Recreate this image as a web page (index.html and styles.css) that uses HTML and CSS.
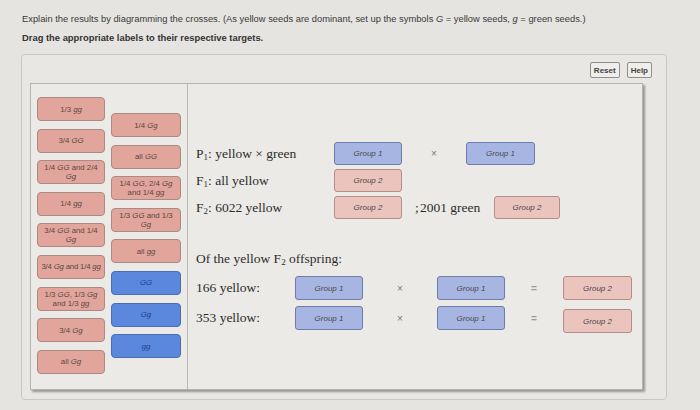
FILE: index.html
```html
<!DOCTYPE html>
<html lang="en">
<head>
<meta charset="utf-8">
<title>Crosses</title>
<link rel="stylesheet" href="styles.css">
</head>
<body>
  <div class="prompt">
    <p>Explain the results by diagramming the crosses. (As yellow seeds are dominant, set up the symbols <i>G</i> = yellow seeds, <i>g</i> = green seeds.)</p>
    <p class="instr">Drag the appropriate labels to their respective targets.</p>
  </div>

  <div class="outer">
    <div class="toolbar">
      <button class="btn">Reset</button>
      <button class="btn">Help</button>
    </div>

    <div class="board">
      <!-- label tray: two columns of draggable labels -->
      <div class="tray">
        <div class="col col-a">
          <div class="lbl pink"><span>1/3 <i>gg</i></span></div>
          <div class="lbl pink"><span>3/4 <i>GG</i></span></div>
          <div class="lbl pink"><span>1/4 <i>GG</i> and 2/4 <i>Gg</i></span></div>
          <div class="lbl pink"><span>1/4 <i>gg</i></span></div>
          <div class="lbl pink"><span>3/4 <i>GG</i> and 1/4 <i>Gg</i></span></div>
          <div class="lbl pink tight"><span>3/4 <i>Gg</i> and 1/4 <i>gg</i></span></div>
          <div class="lbl pink"><span>1/3 <i>GG</i>, 1/3 <i>Gg</i> and 1/3 <i>gg</i></span></div>
          <div class="lbl pink"><span>3/4 <i>Gg</i></span></div>
          <div class="lbl pink"><span>all <i>Gg</i></span></div>
        </div>
        <div class="col col-b">
          <div class="lbl pink"><span>1/4 <i>Gg</i></span></div>
          <div class="lbl pink"><span>all <i>GG</i></span></div>
          <div class="lbl pink"><span>1/4 <i>GG</i>, 2/4 <i>Gg</i> and 1/4 <i>gg</i></span></div>
          <div class="lbl pink"><span>1/3 <i>GG</i> and 1/3 <i>Gg</i></span></div>
          <div class="lbl pink"><span>all <i>gg</i></span></div>
          <div class="lbl blue"><span><i>GG</i></span></div>
          <div class="lbl blue"><span><i>Gg</i></span></div>
          <div class="lbl blue"><span><i>gg</i></span></div>
        </div>
      </div>

      <!-- cross diagram with drop targets -->
      <div class="stage">
        <div class="cross">
          <div class="row">
            <span class="txt w-head">P<sub>1</sub>: yellow × green</span>
            <span class="tgt g1 w-a">Group 1</span>
            <span class="op w-x">×</span>
            <span class="tgt g1 w-b">Group 1</span>
          </div>
          <div class="row">
            <span class="txt w-head">F<sub>1</sub>: all yellow</span>
            <span class="tgt g2 w-a">Group 2</span>
          </div>
          <div class="row">
            <span class="txt w-head">F<sub>2</sub>: 6022 yellow</span>
            <span class="tgt g2 w-a">Group 2</span>
            <span class="txt green">;&#8202;2001 green</span>
            <span class="tgt g2 w-c">Group 2</span>
          </div>
        </div>

        <div class="offspring">
          <div class="title">Of the yellow F<sub>2</sub> offspring:</div>
          <div class="row tall">
            <span class="txt w-head2">166 yellow:</span>
            <span class="tgt g1 w-a">Group 1</span>
            <span class="op w-x2">×</span>
            <span class="tgt g1 w-a">Group 1</span>
            <span class="op eq">=</span>
            <span class="tgt g2 w-b">Group 2</span>
          </div>
          <div class="row tall">
            <span class="txt w-head2">353 yellow:</span>
            <span class="tgt g1 w-a">Group 1</span>
            <span class="op w-x2">×</span>
            <span class="tgt g1 w-a">Group 1</span>
            <span class="op eq">=</span>
            <span class="tgt g2 w-b low">Group 2</span>
          </div>
        </div>
      </div>
    </div>
  </div>
</body>
</html>
```

FILE: styles.css
```css
* { box-sizing: border-box; }

body {
  margin: 0;
  width: 700px;
  height: 410px;
  overflow: hidden;
  background: #e5e4e0;
  font-family: "Liberation Sans", Arial, sans-serif;
  color: #3a3a3a;
}

/* question text */
.prompt {
  padding: 14px 0 0 22px;
  font-size: 9.35px;
  line-height: 11px;
}
.prompt p { margin: 0; }
.prompt .instr {
  margin-top: 7px;
  font-weight: bold;
  font-size: 9.4px;
  color: #333;
}

/* outer question frame */
.outer {
  margin: 11px 0 0 21px;
  width: 646px;
  height: 346px;
  border: 1px solid #c9c8c3;
  border-radius: 4px;
  background: #e8e7e3;
}

.toolbar {
  display: flex;
  justify-content: flex-end;
  gap: 7px;
  height: 28px;
  padding: 7px 14px 0 0;
}
.btn {
  height: 16px;
  padding: 0 3px;
  border: 1px solid #8f8e8a;
  border-radius: 2px;
  background: #efeeea;
  font: bold 8px "Liberation Sans", Arial, sans-serif;
  color: #444;
}

/* drag-and-drop board */
.board {
  margin-left: 8px;
  width: 613px;
  height: 307px;
  display: flex;
  border: 1px solid #b4b3ae;
  background: #ebeae6;
  box-shadow: 2px 2px 2px rgba(0, 0, 0, 0.35);
}

.tray {
  width: 157px;
  flex: none;
  display: flex;
  gap: 6px;
  padding: 13px 0 0 6px;
  border-right: 1px solid #bab9b4;
}
.col {
  display: flex;
  flex-direction: column;
  gap: 7.6px;
}
.col-a { width: 68px; }
.col-b { width: 70px; padding-top: 16px; }

.lbl {
  height: 24px;
  display: flex;
  align-items: center;
  justify-content: center;
  text-align: center;
  padding: 0 3px;
  border: 1px solid;
  border-radius: 4px;
  font-size: 7.8px;
  line-height: 9px;
}
.lbl.tight { padding: 0; letter-spacing: -0.2px; white-space: nowrap; }
.pink {
  background: #e2a59c;
  border-color: #aa8a85;
  color: #5a4543;
}
.blue {
  background: #5b87dc;
  border-color: #4a6db3;
  color: #23408a;
}

/* cross diagram */
.stage {
  flex: 1;
  padding: 58px 0 0 8px;
}
.cross {
  display: flex;
  flex-direction: column;
  gap: 4px;
}
.row {
  display: flex;
  align-items: center;
  height: 23px;
}
.row.tall { height: 24px; }

.txt {
  font-family: "Liberation Serif", "Times New Roman", serif;
  font-size: 13.5px;
  color: #2c2c2c;
  white-space: nowrap;
}
.txt sub, .title sub {
  font-size: 9px;
  vertical-align: -2px;
  line-height: 0;
}
.w-head { width: 138px; }
.w-head2 { width: 99px; }
.green { width: 92px; padding-left: 13px; }

.tgt {
  height: 100%;
  display: flex;
  align-items: center;
  justify-content: center;
  border: 1px solid;
  border-radius: 3px;
  font-size: 8px;
  font-style: italic;
  color: #4a4a4a;
}
.g1 {
  background: #a7b5e2;
  border-color: #6f7ca8;
}
.g2 {
  background: #eac4bd;
  border-color: #b48d87;
}
.w-a { width: 68px; }
.w-b { width: 69px; }
.w-c { width: 66px; }
.low { position: relative; top: 3px; }

.op {
  text-align: center;
  font-size: 10px;
  color: #7a7a7a;
}
.w-x { width: 64px; }
.w-x2 { width: 74px; }
.eq { width: 58px; color: #9a9a9a; font-weight: bold; }

.offspring {
  margin-top: 30px;
}
.title {
  height: 20px;
  line-height: 20px;
  margin-bottom: 7px;
  font-family: "Liberation Serif", "Times New Roman", serif;
  font-size: 13.5px;
  color: #2c2c2c;
}
.offspring .row + .row { margin-top: 6px; }
```
